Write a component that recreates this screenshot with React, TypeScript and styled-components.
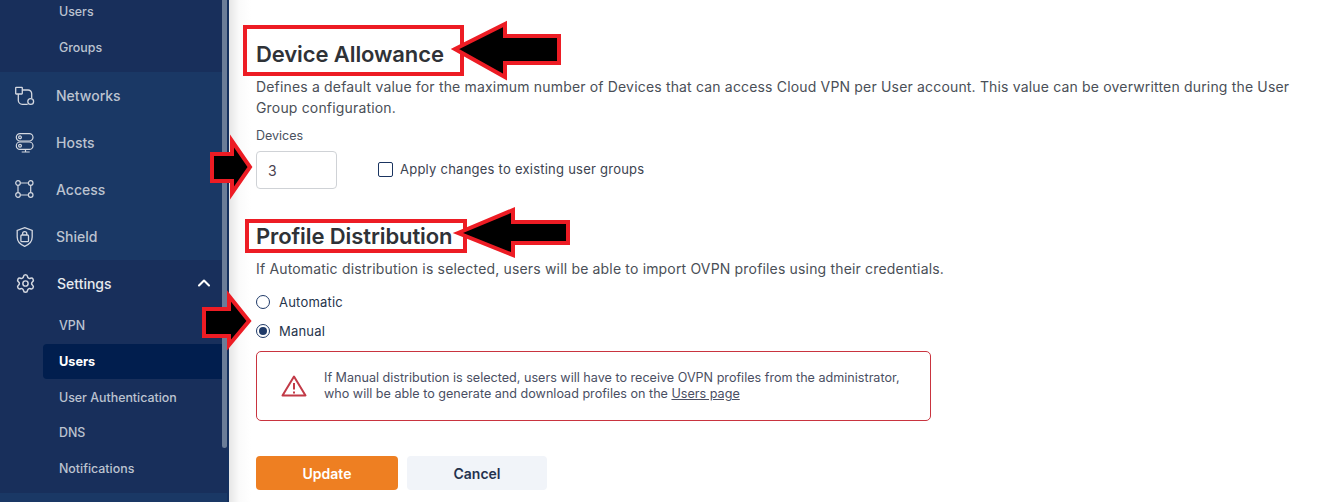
import React from "react";
import styled, { createGlobalStyle } from "styled-components";
import { Settings, ChevronUp } from "lucide-react";

const GlobalStyle = createGlobalStyle`
  html, body {
    margin: 0;
    padding: 0;
    height: 502px;
    overflow: hidden;
    background: #fff;
    font-family: Inter, "Liberation Sans", sans-serif;
  }
`;

const Page = styled.div`
  position: relative;
  display: flex;
  width: 1332px;
  height: 502px;
  overflow: hidden;
`;

const Sidebar = styled.aside`
  position: relative;
  flex: 0 0 229px;
  height: 502px;
  overflow: hidden;
  background: #1a3865;
  border-right: 2px solid #14305e;
  box-sizing: border-box;
`;

const Scrollbar = styled.div`
  position: absolute;
  top: 0;
  right: 0;
  width: 5px;
  height: 448px;
  background: #6b7d98;
  border-radius: 0 0 3px 3px;
`;

const SubGroup = styled.div`
  background: #182f5b;
  display: flex;
  flex-direction: column;
`;

/* the list is scrolled, so the first group starts above the window */
const ScrolledGroup = styled(SubGroup)`
  margin-top: -6.5px;
  padding-bottom: 7.5px;
`;

const SettingsGroup = styled(SubGroup)`
  padding-bottom: 7px;
`;

const SubItem = styled.div<{ $active?: boolean }>`
  height: 35.7px;
  margin-left: 43px;
  padding-left: 16px;
  display: flex;
  align-items: center;
  font-size: ${(p) => (p.$active ? "12.7px" : "12.4px")};
  font-weight: ${(p) => (p.$active ? 700 : 500)};
  color: ${(p) => (p.$active ? "#fff" : "#bcc3d0")};
  background: ${(p) => (p.$active ? "#011e4e" : "transparent")};
  border-radius: ${(p) => (p.$active ? "4px 0 0 4px" : "0")};
`;

const NavList = styled.div`
  display: flex;
  flex-direction: column;
`;

const NavItem = styled.div<{ $open?: boolean }>`
  height: ${(p) => (p.$open ? "46px" : "47px")};
  margin-bottom: ${(p) => (p.$open ? "1.5px" : "0")};
  display: flex;
  align-items: center;
  gap: 21px;
  padding-left: 15px;
  font-size: 14px;
  font-weight: 500;
  color: ${(p) => (p.$open ? "#e6e9ee" : "#bcc3d0")};
`;

const IconBox = styled.span`
  flex: 0 0 20px;
  height: 20px;
  color: #d4d8e0;
  display: flex;
  align-items: center;
  justify-content: center;
`;

const Chevron = styled(ChevronUp)`
  margin-left: auto;
  margin-right: 13px;
  color: #fff;
`;

const Main = styled.main`
  flex: 1;
  padding: 40px 28px 0 27px;
  background: linear-gradient(to right, #e6e6e6 0, #fafafa 10px, #ffffff 22px);
  color: #3a3f47;
`;

const Heading = styled.h2`
  margin: 0;
  font-size: 22px;
  line-height: 28px;
  font-weight: 600;
  letter-spacing: -0.1px;
  color: #2f3237;
`;

const Description = styled.p`
  margin: 8px 0 0;
  font-size: 14px;
  line-height: 21px;
  letter-spacing: 0.17px;
  color: #4a4f57;
`;

const FieldLabel = styled.div`
  margin-top: 9px;
  font-size: 12.5px;
  line-height: 18px;
  color: #4a5260;
`;

const DeviceRow = styled.div`
  margin-top: 6px;
  display: flex;
  align-items: center;
  gap: 41px;
`;

const NumberBox = styled.div`
  width: 81px;
  height: 38px;
  box-sizing: border-box;
  border: 1px solid #cfd2d6;
  border-radius: 4px;
  padding-left: 11px;
  display: flex;
  align-items: center;
  font-size: 14px;
  color: #4a4250;
`;

const CheckLabel = styled.label`
  display: flex;
  align-items: center;
  gap: 7px;
  margin-bottom: 2px;
  font-size: 13px;
  letter-spacing: 0.24px;
  color: #3c4350;
`;

const CheckBox = styled.span`
  width: 15px;
  height: 15px;
  box-sizing: border-box;
  border: 1px solid #1a3460;
  border-radius: 2px;
`;

const ProfileSection = styled.section`
  margin-top: 33px;
`;

const RadioList = styled.div`
  margin-top: 13px;
  display: flex;
  flex-direction: column;
  gap: 9px;
`;

const RadioRow = styled.label`
  height: 20px;
  display: flex;
  align-items: center;
  gap: 9px;
  font-size: 13px;
  letter-spacing: 0.2px;
  color: #26344c;
`;

const RadioDot = styled.span<{ $checked?: boolean }>`
  width: 14px;
  height: 14px;
  box-sizing: border-box;
  border: 1.5px solid #1f3a68;
  border-radius: 50%;
  display: flex;
  align-items: center;
  justify-content: center;
  &::after {
    content: "";
    display: ${(p) => (p.$checked ? "block" : "none")};
    width: 8px;
    height: 8px;
    border-radius: 50%;
    background: #1f3a68;
  }
`;

const Alert = styled.div`
  margin-top: 10px;
  width: 675px;
  height: 70px;
  box-sizing: border-box;
  border: 1px solid #c9343f;
  border-radius: 5px;
  padding-left: 24px;
  display: flex;
  align-items: center;
  gap: 17px;
`;

const AlertText = styled.div`
  font-size: 12.6px;
  line-height: 16px;
  color: #4a4f63;
`;

const AlertLink = styled.span`
  text-decoration: underline;
`;

const Actions = styled.div`
  margin-top: 35px;
  display: flex;
  gap: 9px;
`;

const ActionButton = styled.button<{ $primary?: boolean }>`
  width: ${(p) => (p.$primary ? "142px" : "140px")};
  height: 34px;
  border: 0;
  border-radius: 4px;
  font-family: inherit;
  font-size: 14px;
  font-weight: 600;
  color: ${(p) => (p.$primary ? "#fff" : "#24324e")};
  background: ${(p) => (p.$primary ? "#ee7f22" : "#f1f4f9")};
`;

/* annotation layer drawn over the screenshot */
const Mark = styled.div<{ $x: number; $y: number; $w: number; $h: number }>`
  position: absolute;
  left: ${(p) => p.$x}px;
  top: ${(p) => p.$y}px;
  width: ${(p) => p.$w}px;
  height: ${(p) => p.$h}px;
  box-sizing: border-box;
  border: 4px solid #ed1c24;
`;

const Annotations = styled.svg`
  position: absolute;
  left: 0;
  top: 0;
  width: 1332px;
  height: 502px;
  pointer-events: none;
`;

const arrows = [
  "455,49 505,24 505,36 559,36 559,63 505,63 505,77",
  "212,154 232,154 232,141 250,167 232,193 232,181 212,181",
  "458,233 513,210 513,222 568,222 568,243 513,243 513,255",
  "204,309 229,309 229,296 249,321 229,345 229,336 204,336",
];

const NetworksIcon = () => (
  <svg width="20" height="20" viewBox="0 0 20 20" fill="none" stroke="currentColor" strokeWidth="1.3">
    <rect x="0.7" y="1.3" width="6.6" height="6.7" rx="0.5" />
    <path d="M7.3 4H13a3.7 3.7 0 0 1 3.7 3.7V12" />
    <path d="M3.3 8v6.3A4 4 0 0 0 7.3 18.3H12.7" />
    <circle cx="15.7" cy="15.5" r="2.9" />
  </svg>
);

const HostsIcon = () => (
  <svg width="20" height="20" viewBox="0 0 20 20" fill="none" stroke="currentColor" strokeWidth="1.2">
    <rect x="1.3" y="0.6" width="16.7" height="7.4" rx="3.7" />
    <rect x="1.3" y="9" width="16.7" height="7.4" rx="3.7" />
    <circle cx="5" cy="4.3" r="1.4" />
    <circle cx="5" cy="12.7" r="1.4" />
    <path d="M10.5 16.4v2.6M6.7 19h8" />
  </svg>
);

const AccessIcon = () => (
  <svg width="20" height="20" viewBox="0 0 20 20" fill="none" stroke="currentColor" strokeWidth="1.2">
    <circle cx="3" cy="3" r="2.3" />
    <circle cx="15.7" cy="3" r="2.3" />
    <circle cx="3" cy="15" r="2.3" />
    <circle cx="15.7" cy="15" r="2.3" />
    <path d="M5.3 3h8.1M5.3 15h8.1M3 5.3v7.4M15.7 5.3v7.4" />
  </svg>
);

const ShieldIcon = () => (
  <svg width="20" height="20" viewBox="0 0 20 20" fill="none" stroke="currentColor" strokeWidth="1.3">
    <path d="M9.7 0.7L17.2 3.5V10c0 4-3 7.5-7.5 9.3C5.2 17.5 2.2 14 2.2 10V3.5z" />
    <rect x="5.9" y="8" width="7.6" height="6.7" rx="1" />
    <path d="M7.6 8V6.8a2.1 2.1 0 0 1 4.2 0V8" />
  </svg>
);

const WarningIcon = () => (
  <svg width="26" height="24" viewBox="0 0 26 24" fill="none" stroke="#c23a47" strokeWidth="2" strokeLinejoin="round">
    <path d="M13 2.5L24.5 21.5H1.5z" />
    <path d="M13 9v6.5M13 17.5v2" />
  </svg>
);

export default function App() {
  return (
    <Page>
      <GlobalStyle />
      <Sidebar>
        <ScrolledGroup>
          <SubItem>Users</SubItem>
          <SubItem>Groups</SubItem>
        </ScrolledGroup>
        <NavList>
          <NavItem><IconBox><NetworksIcon /></IconBox>Networks</NavItem>
          <NavItem><IconBox><HostsIcon /></IconBox>Hosts</NavItem>
          <NavItem><IconBox><AccessIcon /></IconBox>Access</NavItem>
          <NavItem><IconBox><ShieldIcon /></IconBox>Shield</NavItem>
        </NavList>
        <SettingsGroup>
          <NavItem $open>
            <IconBox><Settings size={21} strokeWidth={1.7} /></IconBox>
            Settings
            <Chevron size={20} strokeWidth={2.5} />
          </NavItem>
          <SubItem>VPN</SubItem>
          <SubItem $active>Users</SubItem>
          <SubItem>User Authentication</SubItem>
          <SubItem>DNS</SubItem>
          <SubItem>Notifications</SubItem>
        </SettingsGroup>
        <Scrollbar />
      </Sidebar>
      <Main>
        <section>
          <Heading>Device Allowance</Heading>
          <Description>
            Defines a default value for the maximum number of Devices that can access Cloud VPN per User account. This value can be overwritten during the User Group configuration.
          </Description>
          <FieldLabel>Devices</FieldLabel>
          <DeviceRow>
            <NumberBox>3</NumberBox>
            <CheckLabel><CheckBox />Apply changes to existing user groups</CheckLabel>
          </DeviceRow>
        </section>
        <ProfileSection>
          <Heading>Profile Distribution</Heading>
          <Description>
            If Automatic distribution is selected, users will be able to import OVPN profiles using their credentials.
          </Description>
          <RadioList>
            <RadioRow><RadioDot />Automatic</RadioRow>
            <RadioRow><RadioDot $checked />Manual</RadioRow>
          </RadioList>
          <Alert>
            <WarningIcon />
            <AlertText>
              If Manual distribution is selected, users will have to receive OVPN profiles from the administrator,<br />
              who will be able to generate and download profiles on the <AlertLink>Users page</AlertLink>
            </AlertText>
          </Alert>
        </ProfileSection>
        <Actions>
          <ActionButton $primary>Update</ActionButton>
          <ActionButton>Cancel</ActionButton>
        </Actions>
      </Main>
      <Mark $x={243} $y={25} $w={221} $h={51} />
      <Mark $x={245} $y={219} $w={222} $h={34} />
      <Annotations viewBox="0 0 1332 502">
        {arrows.map((points) => (
          <polygon key={points} points={points} fill="#000" stroke="#ed1c24" strokeWidth="4" />
        ))}
      </Annotations>
    </Page>
  );
}
